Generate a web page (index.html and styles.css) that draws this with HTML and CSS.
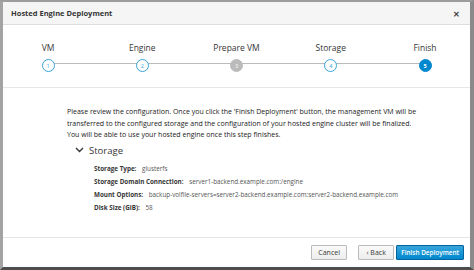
FILE: index.html
```html
<!DOCTYPE html>
<html lang="en">
<head>
    <meta charset="UTF-8">
    <title>Hosted Engine Deployment</title>
    <link rel="stylesheet" href="styles.css">
</head>
<body>

<div class="modal">
  <div class="modal-header">
    <span class="modal-title">Hosted Engine Deployment</span>
    <span class="close">&#x2715;</span>
  </div>

  <div class="steps">
    <div class="step done"><span class="step-label">VM</span><span class="step-circle">1</span></div>
    <div class="step done"><span class="step-label">Engine</span><span class="step-circle">2</span></div>
    <div class="step grey"><span class="step-label">Prepare VM</span><span class="step-circle">3</span></div>
    <div class="step done"><span class="step-label">Storage</span><span class="step-circle">4</span></div>
    <div class="step active"><span class="step-label">Finish</span><span class="step-circle">5</span></div>
  </div>

  <div class="modal-body">
    <p class="intro">Please review the configuration. Once you click the 'Finish Deployment' button, the management VM will be transferred to the configured storage and the configuration of your hosted engine cluster will be finalized. You will be able to use your hosted engine once this step finishes.</p>

    <div class="section-title">
      <svg class="chevron" width="9" height="6" viewBox="0 0 9 6"><path d="M1 1 L4.5 4.5 L8 1" fill="none" stroke="#363636" stroke-width="1.4"/></svg>
      <span>Storage</span>
    </div>

    <div class="details">
      <div class="row"><b>Storage Type:</b> glusterfs</div>
      <div class="row"><b>Storage Domain Connection:</b> server1-backend.example.com:/engine</div>
      <div class="row"><b>Mount Options:</b> backup-volfile-servers=server2-backend.example.com:server2-backend.example.com</div>
      <div class="row"><b>Disk Size (GiB):</b> 58</div>
    </div>
  </div>

  <div class="modal-footer">
    <button class="btn" type="button">Cancel</button>
    <button class="btn back" type="button">&lsaquo; Back</button>
    <button class="btn primary" type="button">Finish Deployment</button>
  </div>
</div>

</body>
</html>
```

FILE: styles.css
```css
html, body {
  margin: 0;
  height: 100%;
}

body {
  box-sizing: border-box;
  background: #8c8c8c;
  border-left: 3px solid #a3a3a3;
  border-top: 2px solid #9c9c9c;
  border-right: 4px solid #8a8a8a;
  border-bottom: 3px solid #4d4d4d;
  font-family: "Open Sans", "Liberation Sans", sans-serif;
  color: #363636;
}

.modal {
  background: #fff;
  height: 100%;
  display: flex;
  flex-direction: column;
}

.modal-header {
  height: 22px;
  background: #f5f5f5;
  border-bottom: 1px solid #dedede;
  display: flex;
  align-items: center;
  justify-content: space-between;
  padding: 0 10px 0 8px;
}

.modal-title {
  font-size: 7.5px;
  font-weight: bold;
  color: #363636;
}

.close {
  font-size: 8px;
  font-weight: bold;
  color: #444;
}

.steps {
  position: relative;
  display: flex;
  justify-content: space-between;
  padding: 17px 15px 0;
  height: 45px;
  border-bottom: 1px solid #e6e6e6;
}

.steps::before {
  content: "";
  position: absolute;
  left: 45px;
  right: 45px;
  top: 38px;
  border-top: 1px solid #bbb;
}

.step {
  width: 60px;
  display: flex;
  flex-direction: column;
  align-items: center;
  gap: 5px;
  position: relative;
}

.step-label {
  font-size: 8.5px;
  line-height: 12px;
  color: #363636;
}

.step-circle {
  box-sizing: border-box;
  width: 13px;
  height: 13px;
  border-radius: 50%;
  border: 1px solid #39a5dc;
  background: #fff;
  color: #39a5dc;
  font-size: 5.5px;
  display: flex;
  align-items: center;
  justify-content: center;
}

.step.grey .step-circle {
  background: #bbb;
  border-color: #bbb;
  color: #fff;
}

.step.active .step-circle {
  background: #0088ce;
  border-color: #0088ce;
  color: #fff;
  font-weight: bold;
}

.modal-body {
  flex: 1;
  padding: 18px 0 0 64px;
  border-bottom: 1px solid #e6e6e6;
}

.intro {
  margin: 0;
  width: 352px;
  font-size: 7px;
  line-height: 11.5px;
  color: #222;
}

.section-title {
  display: flex;
  align-items: center;
  gap: 5px;
  margin: 3px 0 0 8px;
  font-size: 9.5px;
  color: #363636;
}

.details {
  margin: 5px 0 0 27px;
  font-size: 6.3px;
  color: #555;
}

.details .row {
  height: 13px;
  line-height: 13px;
  white-space: nowrap;
}

.details b {
  color: #363636;
  font-weight: bold;
  margin-right: 4px;
}

.modal-footer {
  height: 29px;
  display: flex;
  align-items: center;
  justify-content: flex-end;
  padding: 0 6px 0 0;
}

.btn {
  height: 15px;
  padding: 0 6px;
  font-family: "Open Sans", "Liberation Sans", sans-serif;
  font-size: 7px;
  color: #363636;
  background: linear-gradient(#fafafa, #ededed);
  border: 1px solid #bbb;
  border-radius: 1px;
  margin-left: 2px;
}

.btn.back {
  margin-left: 11px;
  padding: 0 7.5px;
}

.btn.primary {
  background: linear-gradient(#39a5dc, #0088ce);
  border-color: #00659c;
  color: #fff;
  font-weight: 600;
  font-size: 6.4px;
  padding: 0 4px;
}
```
